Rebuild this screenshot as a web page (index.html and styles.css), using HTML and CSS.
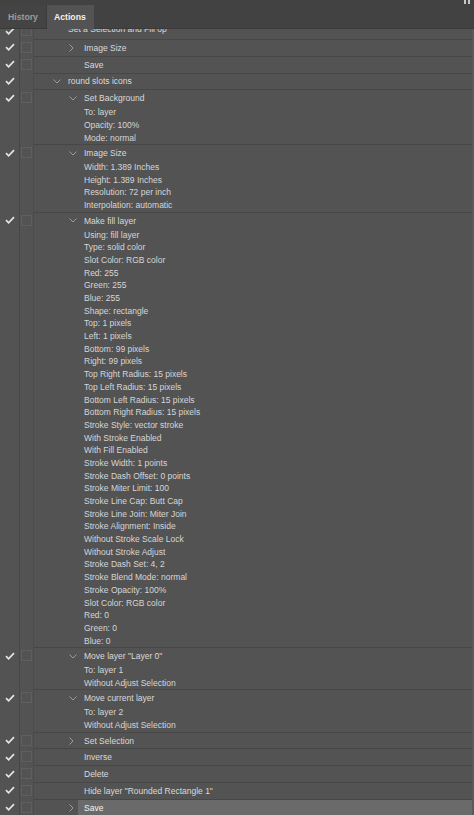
FILE: index.html
```html
<!DOCTYPE html>
<html>
<head>
	<title>Actions</title>
	<link rel="stylesheet" href="styles.css">
</head>
<body>
<div class="panel">
	<div class="tabs">
		<div class="tab">History</div>
		<div class="tab active">Actions</div>
		<div class="grip"><span></span><span></span></div>
	</div>
	<div class="list">
		<div class="rows">
			<!-- partially scrolled out action -->
			<div class="row first">
				<div class="check"><svg class="tick" width="10" height="8" viewBox="0 0 10 8"><path d="M1 4.2 L3.6 6.8 L9 1.2"/></svg></div>
				<div class="dlg"><span class="box"></span></div>
				<div class="item action"><span class="slot"></span><span class="label">Set a Selection and Fill op</span></div>
			</div>
			<div class="row">
				<div class="check"><svg class="tick" width="10" height="8" viewBox="0 0 10 8"><path d="M1 4.2 L3.6 6.8 L9 1.2"/></svg></div>
				<div class="dlg"><span class="box"></span></div>
				<div class="item step"><span class="slot"><svg class="chev" width="5" height="8" viewBox="0 0 5 8"><path d="M0.5 0.5 L4 4 L0.5 7.5"/></svg></span><span class="label">Image Size</span></div>
			</div>
			<div class="row">
				<div class="check"><svg class="tick" width="10" height="8" viewBox="0 0 10 8"><path d="M1 4.2 L3.6 6.8 L9 1.2"/></svg></div>
				<div class="dlg"><span class="box"></span></div>
				<div class="item step"><span class="slot"></span><span class="label">Save</span></div>
			</div>
			<div class="row">
				<div class="check"><svg class="tick" width="10" height="8" viewBox="0 0 10 8"><path d="M1 4.2 L3.6 6.8 L9 1.2"/></svg></div>
				<div class="dlg"></div>
				<div class="item action"><span class="slot"><svg class="chev" width="8" height="5" viewBox="0 0 8 5"><path d="M0.5 0.5 L4 4 L7.5 0.5"/></svg></span><span class="label">round slots icons</span></div>
			</div>
			<div class="row">
				<div class="check"><svg class="tick" width="10" height="8" viewBox="0 0 10 8"><path d="M1 4.2 L3.6 6.8 L9 1.2"/></svg></div>
				<div class="dlg"><span class="box"></span></div>
				<div class="item step"><span class="slot"><svg class="chev" width="8" height="5" viewBox="0 0 8 5"><path d="M0.5 0.5 L4 4 L7.5 0.5"/></svg></span><span class="label">Set Background</span></div>
			</div>
			<div class="params">
				<div class="check"></div>
				<div class="dlg"></div>
				<div class="lines">
					<div>To: layer</div>
					<div>Opacity: 100%</div>
					<div>Mode: normal</div>
				</div>
			</div>
			<div class="row">
				<div class="check"><svg class="tick" width="10" height="8" viewBox="0 0 10 8"><path d="M1 4.2 L3.6 6.8 L9 1.2"/></svg></div>
				<div class="dlg"><span class="box"></span></div>
				<div class="item step"><span class="slot"><svg class="chev" width="8" height="5" viewBox="0 0 8 5"><path d="M0.5 0.5 L4 4 L7.5 0.5"/></svg></span><span class="label">Image Size</span></div>
			</div>
			<div class="params">
				<div class="check"></div>
				<div class="dlg"></div>
				<div class="lines">
					<div>Width: 1.389 Inches</div>
					<div>Height: 1.389 Inches</div>
					<div>Resolution: 72 per inch</div>
					<div>Interpolation: automatic</div>
				</div>
			</div>
			<div class="row">
				<div class="check"><svg class="tick" width="10" height="8" viewBox="0 0 10 8"><path d="M1 4.2 L3.6 6.8 L9 1.2"/></svg></div>
				<div class="dlg"><span class="box"></span></div>
				<div class="item step"><span class="slot"><svg class="chev" width="8" height="5" viewBox="0 0 8 5"><path d="M0.5 0.5 L4 4 L7.5 0.5"/></svg></span><span class="label">Make fill layer</span></div>
			</div>
			<div class="params">
				<div class="check"></div>
				<div class="dlg"></div>
				<div class="lines">
					<div>Using: fill layer</div>
					<div>Type: solid color</div>
					<div>Slot Color: RGB color</div>
					<div>Red: 255</div>
					<div>Green: 255</div>
					<div>Blue: 255</div>
					<div>Shape: rectangle</div>
					<div>Top: 1 pixels</div>
					<div>Left: 1 pixels</div>
					<div>Bottom: 99 pixels</div>
					<div>Right: 99 pixels</div>
					<div>Top Right Radius: 15 pixels</div>
					<div>Top Left Radius: 15 pixels</div>
					<div>Bottom Left Radius: 15 pixels</div>
					<div>Bottom Right Radius: 15 pixels</div>
					<div>Stroke Style: vector stroke</div>
					<div>With Stroke Enabled</div>
					<div>With Fill Enabled</div>
					<div>Stroke Width: 1 points</div>
					<div>Stroke Dash Offset: 0 points</div>
					<div>Stroke Miter Limit: 100</div>
					<div>Stroke Line Cap: Butt Cap</div>
					<div>Stroke Line Join: Miter Join</div>
					<div>Stroke Alignment: Inside</div>
					<div>Without Stroke Scale Lock</div>
					<div>Without Stroke Adjust</div>
					<div>Stroke Dash Set: 4, 2</div>
					<div>Stroke Blend Mode: normal</div>
					<div>Stroke Opacity: 100%</div>
					<div>Slot Color: RGB color</div>
					<div>Red: 0</div>
					<div>Green: 0</div>
					<div>Blue: 0</div>
				</div>
			</div>
			<div class="row">
				<div class="check"><svg class="tick" width="10" height="8" viewBox="0 0 10 8"><path d="M1 4.2 L3.6 6.8 L9 1.2"/></svg></div>
				<div class="dlg"><span class="box"></span></div>
				<div class="item step"><span class="slot"><svg class="chev" width="8" height="5" viewBox="0 0 8 5"><path d="M0.5 0.5 L4 4 L7.5 0.5"/></svg></span><span class="label">Move layer "Layer 0"</span></div>
			</div>
			<div class="params">
				<div class="check"></div>
				<div class="dlg"></div>
				<div class="lines">
					<div>To: layer 1</div>
					<div>Without Adjust Selection</div>
				</div>
			</div>
			<div class="row">
				<div class="check"><svg class="tick" width="10" height="8" viewBox="0 0 10 8"><path d="M1 4.2 L3.6 6.8 L9 1.2"/></svg></div>
				<div class="dlg"><span class="box"></span></div>
				<div class="item step"><span class="slot"><svg class="chev" width="8" height="5" viewBox="0 0 8 5"><path d="M0.5 0.5 L4 4 L7.5 0.5"/></svg></span><span class="label">Move current layer</span></div>
			</div>
			<div class="params">
				<div class="check"></div>
				<div class="dlg"></div>
				<div class="lines">
					<div>To: layer 2</div>
					<div>Without Adjust Selection</div>
				</div>
			</div>
			<div class="row">
				<div class="check"><svg class="tick" width="10" height="8" viewBox="0 0 10 8"><path d="M1 4.2 L3.6 6.8 L9 1.2"/></svg></div>
				<div class="dlg"><span class="box"></span></div>
				<div class="item step"><span class="slot"><svg class="chev" width="5" height="8" viewBox="0 0 5 8"><path d="M0.5 0.5 L4 4 L0.5 7.5"/></svg></span><span class="label">Set Selection</span></div>
			</div>
			<div class="row">
				<div class="check"><svg class="tick" width="10" height="8" viewBox="0 0 10 8"><path d="M1 4.2 L3.6 6.8 L9 1.2"/></svg></div>
				<div class="dlg"><span class="box"></span></div>
				<div class="item step"><span class="slot"></span><span class="label">Inverse</span></div>
			</div>
			<div class="row">
				<div class="check"><svg class="tick" width="10" height="8" viewBox="0 0 10 8"><path d="M1 4.2 L3.6 6.8 L9 1.2"/></svg></div>
				<div class="dlg"><span class="box"></span></div>
				<div class="item step"><span class="slot"></span><span class="label">Delete</span></div>
			</div>
			<div class="row">
				<div class="check"><svg class="tick" width="10" height="8" viewBox="0 0 10 8"><path d="M1 4.2 L3.6 6.8 L9 1.2"/></svg></div>
				<div class="dlg"><span class="box"></span></div>
				<div class="item step"><span class="slot"></span><span class="label">Hide layer "Rounded Rectangle 1"</span></div>
			</div>
			<div class="row">
				<div class="check"><svg class="tick" width="10" height="8" viewBox="0 0 10 8"><path d="M1 4.2 L3.6 6.8 L9 1.2"/></svg></div>
				<div class="dlg"><span class="box"></span></div>
				<div class="item step"><span class="slot"><svg class="chev" width="5" height="8" viewBox="0 0 5 8"><path d="M0.5 0.5 L4 4 L0.5 7.5"/></svg></span><span class="label selected">Save</span></div>
			</div>
		</div>
		<div class="scroll"></div>
	</div>
</div>
</body>
</html>
```

FILE: styles.css
```css
body {
  margin: 0;
  background-color: #535353;
  font-family: "Liberation Sans", Arial, sans-serif;
}

.panel {
  width: 474px;
  height: 815px;
  display: flex;
  flex-direction: column;
  overflow: hidden;
}

/* tab strip */
.tabs {
  height: 28px;
  flex-shrink: 0;
  display: flex;
  align-items: flex-end;
  background-color: #424242;
  border-bottom: 1px solid #3a3a3a;
  position: relative;
}

.tab {
  height: 23px;
  display: flex;
  align-items: center;
  padding: 0 8px;
  font-size: 8.7px;
  font-weight: bold;
  color: #9c9c9c;
  background-color: #444444;
  border-right: 1px solid #3b3b3b;
}

.tab.active {
  padding: 0 8px 0 7px;
  background-color: #535353;
  color: #f2f2f2;
  margin-bottom: -1px;
  height: 24px;
  border-right: none;
}

.grip {
  position: absolute;
  top: 0;
  right: 4px;
  display: flex;
  gap: 2px;
}

.grip span {
  width: 2px;
  height: 4px;
  background-color: #c8c8c8;
}

/* list */
.list {
  flex: 1;
  display: flex;
  overflow: hidden;
}

.rows {
  flex: 1;
}

.scroll {
  width: 2px;
  background-color: #5a5a5a;
}

.row,
.params {
  display: flex;
}

.row {
  height: 16.8px;
}

.row.first {
  margin-top: -6.8px;
}

.row.first .label {
  padding-bottom: 4px;
}

.check {
  width: 19px;
  flex-shrink: 0;
  border-right: 1px solid #474747;
  display: flex;
  align-items: center;
  justify-content: center;
}

.dlg {
  width: 13px;
  flex-shrink: 0;
  border-right: 1px solid #4c4c4c;
  display: flex;
  align-items: center;
  justify-content: center;
}

.box {
  width: 9px;
  height: 9px;
  border: 1px solid #5f5f5f;
}

.tick path {
  fill: none;
  stroke: #e4e4e4;
  stroke-width: 1.7;
}

.item {
  flex: 1;
  display: flex;
  align-items: stretch;
  border-top: 1px solid #474747;
  min-width: 0;
}

.item.action {
  padding-left: 18px;
}

.item.step {
  padding-left: 34px;
}

.slot {
  width: 10px;
  flex-shrink: 0;
  display: flex;
  align-items: center;
}

.chev {
  margin-left: 1px;
}

.chev path {
  fill: none;
  stroke: #9c9c9c;
  stroke-width: 1;
}

.label {
  flex: 1;
  display: flex;
  align-items: center;
  padding-left: 6px;
  font-size: 8.5px;
  color: #dadada;
  white-space: nowrap;
}

.label.selected {
  background-color: #6a6a6a;
  color: #f4f4f4;
}

.lines {
  flex: 1;
  padding-left: 50px;
  font-size: 8.5px;
  line-height: 12.68px;
  color: #d6d6d6;
  white-space: nowrap;
}
```
